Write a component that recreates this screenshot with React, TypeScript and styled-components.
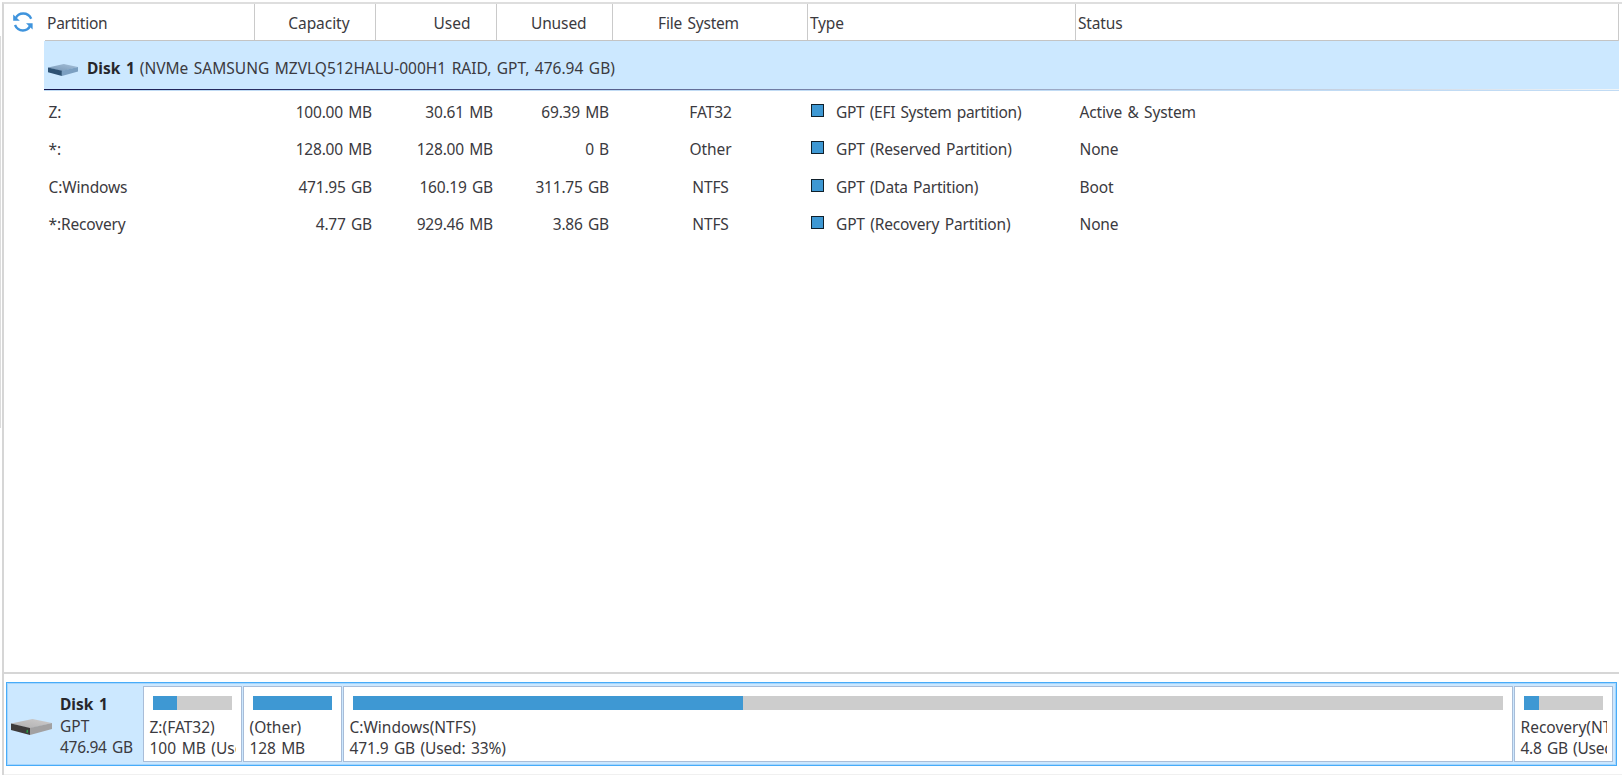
import React from "react";
import styled, { createGlobalStyle } from "styled-components";

const GlobalStyle = createGlobalStyle`
  * { box-sizing: border-box; }
  html, body { margin: 0; padding: 0; background: #fff; overflow: hidden; }
  body {
    font-family: "Noto Sans", "Open Sans", sans-serif;
    font-size: 15.5px;
    line-height: 22px;
    word-spacing: 1.5px;
    color: #3b3a40;
  }
`;

const COLUMNS = "210px 121px 121px 116px 195px 268px 1fr";

const Screen = styled.div`
  display: flex;
  width: 1622px;
  height: 775px;
  padding-top: 2px;
`;

const Gutter = styled.div`
  width: 2px;
  flex: none;
  margin-top: 34px;
  height: 392px;
  border-left: 1px solid #dcdcdc;
`;

const Main = styled.main`
  display: flex;
  flex-direction: column;
  flex: 1;
  min-width: 0;
  border-left: 2px solid #d6d6d6;
  border-top: 2px solid #dedede;
`;

const Table = styled.section`
  display: flex;
  flex-direction: column;
  height: 668px;
  flex: none;
  margin-right: 3px;
`;

const Header = styled.div`
  display: flex;
  height: 37px;
  flex: none;
  border-right: 1px solid #cacaca;
`;

const RefreshCell = styled.div`
  width: 41px;
  padding: 8px 0 0 9px;
`;

const HeaderGrid = styled.div`
  display: grid;
  grid-template-columns: ${COLUMNS};
  flex: 1;
  border-bottom: 1px solid #c4c4c4;
`;

type Align = "left" | "right" | "center";

const HeaderCell = styled.div<{ $align?: Align; $track?: number }>`
  padding: 8px ${(p) => (p.$align === "right" ? 25.5 : 23)}px 0 ${(p) => (p.$align === "center" ? 0 : 2)}px;
  text-align: ${(p) => p.$align ?? "left"};
  letter-spacing: ${(p) => p.$track ?? 0}px;
  border-right: 1px solid #cacaca;
  white-space: nowrap;
  &:last-child { border-right: 0; }
`;

const DiskRow = styled.div`
  display: flex;
  align-items: center;
  height: 48px;
  flex: none;
  margin-left: 40px;
  padding: 6px 0 0 4px;
  background: #cce8ff;
`;

const DiskIcon = styled.span`
  display: flex;
  padding-top: 4px;
`;

const DiskRule = styled.div`
  height: 1px;
  flex: none;
  margin-left: 40px;
  background: linear-gradient(90deg, #14184f 0%, #3b4275 25%, #7986ad 50%, #b7c4d8 75%, #f1f5f8 100%);
  box-shadow: 0 1px 0 #c1dbf4;
`;

const DiskTitle = styled.div`
  display: flex;
  gap: 5px;
  margin-left: 9px;
  white-space: nowrap;
`;

const Bold = styled.strong`
  font-weight: 700;
  color: #27272b;
`;

const Text = styled.span<{ $track?: number }>`
  letter-spacing: ${(p) => p.$track ?? 0}px;
`;

const Rows = styled.div`
  margin: 3px 0 0 41px;
`;

const Row = styled.div`
  display: grid;
  grid-template-columns: ${COLUMNS};
  align-items: center;
  height: 37.5px;
`;

const Cell = styled.div<{ $align?: Align; $track?: number }>`
  padding: 0 ${(p) => (p.$align === "right" ? 4 : 0)}px 0 ${(p) => (p.$align === "center" ? 0 : 3.5)}px;
  text-align: ${(p) => p.$align ?? "left"};
  letter-spacing: ${(p) => p.$track ?? 0}px;
  white-space: nowrap;
`;

const TypeCell = styled(Cell)`
  display: flex;
  align-items: center;
  gap: 12px;
  padding-left: 3px;
`;

const Swatch = styled.i`
  width: 13px;
  height: 13px;
  flex: none;
  margin-bottom: 3px;
  background: #3e98d3;
  border: 1px solid #10202b;
`;

const Splitter = styled.div`
  height: 2px;
  flex: none;
  margin-right: 3px;
  background: #d6d6d6;
`;

const DiskMap = styled.section`
  display: flex;
  gap: 1px;
  height: 84px;
  flex: none;
  margin: 8px 5px 0 2px;
  padding: 3px 3px 3px 2px;
  background: #cce8ff;
  border: 1px solid #47acf9;
  box-shadow: inset 0 0 0 1px #a6d5fc;
`;

const DiskInfo = styled.div`
  display: flex;
  align-items: center;
  gap: 8px;
  width: 133px;
  padding-left: 2px;
  flex: none;
`;

const DriveSlot = styled.span`
  display: flex;
  padding-top: 5px;
`;

const DiskLabels = styled.div`
  display: flex;
  flex-direction: column;
  white-space: nowrap;
  margin-top: 5px;
  line-height: 21.8px;
`;

const PartitionCard = styled.div<{ $wide?: boolean }>`
  flex: ${(p) => (p.$wide ? "1 1 0" : "0 0 99px")};
  min-width: 0;
  padding: 9px 5px 0;
  background: #fff;
  border: 1px solid #a9bdd8;
`;

const UsageBar = styled.div`
  display: flex;
  height: 14px;
  margin: 0 4px 7px;
  background: #cdcdcd;
`;

const UsageFill = styled.div`
  background: #3e98d3;
`;

const CardLine = styled.div<{ $track?: number }>`
  overflow: hidden;
  padding-left: 0.5px;
  line-height: 21px;
  white-space: nowrap;
  letter-spacing: ${(p) => p.$track ?? 0}px;
`;

const BottomEdge = styled.div`
  margin-top: auto;
  height: 1px;
  background: #f0f0f0;
`;

const RefreshIcon = () => (
  <svg width="20" height="20" viewBox="0 0 20 20" fill="none">
    <path d="M2.6 6.4C4 3.2 7 1.5 10.2 1.5c3.5 0 6.5 2 8 5.2" stroke="#3f94dd" strokeWidth="2.4" />
    <path d="M0.2 2.5v6.2h6.6z" fill="#3f94dd" />
    <path d="M17.3 13.5c-1.4 3.2-4.2 5-7.4 5-3.5 0-6.4-2-7.9-5.4" stroke="#3f94dd" strokeWidth="2.4" />
    <path d="M19.6 17.5v-6.2h-6.6z" fill="#3f94dd" />
  </svg>
);

const DriveIcon = ({ blue = false }: { blue?: boolean }) => {
  const id = blue ? "top-blue" : "top-gray";
  return (
    <svg width={blue ? 30 : 41} height={blue ? 12 : 16} viewBox="0 0 41 16" preserveAspectRatio="none">
      <defs>
        <linearGradient id={id} x1="0" y1="1" x2="1" y2="0">
          <stop offset="0" stopColor={blue ? "#7595b5" : "#aeadae"} />
          <stop offset="1" stopColor={blue ? "#a7c1d9" : "#cecccc"} />
        </linearGradient>
      </defs>
      <path d="M0 4.5 21.5 0 41 4 19 9.5z" fill={`url(#${id})`} />
      <path d="M0 4.5 19 9v7L0 11z" fill={blue ? "#2e5274" : "#3d3b3b"} />
      <path d="M19 9 41 4v6l-22 6z" fill={blue ? "#7b9fc1" : "#a2a1a2"} />
      {!blue && <path d="M15.5 11.5 17 10.5v3l-1.5.5z" fill="#27a043" />}
    </svg>
  );
};

const headers: { label: string; align?: Align; track?: number }[] = [
  { label: "Partition", track: -0.25 },
  { label: "Capacity", align: "right", track: -0.05 },
  { label: "Used", align: "right" },
  { label: "Unused", align: "right", track: -0.1 },
  { label: "File System", align: "center", track: -0.2 },
  { label: "Type", track: -0.2 },
  { label: "Status", track: -0.15 },
];

const partitions = [
  { name: "Z:", capacity: "100.00 MB", used: "30.61 MB", unused: "69.39 MB", fs: "FAT32", type: "GPT (EFI System partition)", typeTrack: -0.28, status: "Active & System" },
  { name: "*:", capacity: "128.00 MB", used: "128.00 MB", unused: "0 B", fs: "Other", type: "GPT (Reserved Partition)", typeTrack: -0.15, status: "None" },
  { name: "C:Windows", capacity: "471.95 GB", used: "160.19 GB", unused: "311.75 GB", fs: "NTFS", type: "GPT (Data Partition)", typeTrack: -0.22, status: "Boot" },
  { name: "*:Recovery", capacity: "4.77 GB", used: "929.46 MB", unused: "3.86 GB", fs: "NTFS", type: "GPT (Recovery Partition)", typeTrack: -0.15, status: "None" },
];

const cards = [
  { title: "Z:(FAT32)", detail: "100 MB (Used: 30%)", fill: 30.5, detailTrack: 0 },
  { title: "(Other)", detail: "128 MB", fill: 100, detailTrack: -0.12 },
  { title: "C:Windows(NTFS)", detail: "471.9 GB (Used: 33%)", fill: 33.9, detailTrack: -0.12, wide: true },
  { title: "Recovery(NTFS)", detail: "4.8 GB (Used: 19%)", fill: 19.5, detailTrack: -0.25 },
];

export default function App() {
  return (
    <>
      <GlobalStyle />
      <Screen>
        <Gutter />
        <Main>
          <Table>
            <Header>
              <RefreshCell><RefreshIcon /></RefreshCell>
              <HeaderGrid>
                {headers.map((h) => (
                  <HeaderCell key={h.label} $align={h.align} $track={h.track}>{h.label}</HeaderCell>
                ))}
              </HeaderGrid>
            </Header>
            <DiskRow>
              <DiskIcon><DriveIcon blue /></DiskIcon>
              <DiskTitle>
                <Bold>Disk 1</Bold>
                <Text>(NVMe SAMSUNG MZVLQ512HALU-000H1 RAID, GPT, 476.94 GB)</Text>
              </DiskTitle>
            </DiskRow>
            <DiskRule />
            <Rows>
              {partitions.map((p, i) => (
                <Row key={i}>
                  <Cell $track={-0.15}>{p.name}</Cell>
                  <Cell $align="right" $track={-0.2}>{p.capacity}</Cell>
                  <Cell $align="right" $track={-0.2}>{p.used}</Cell>
                  <Cell $align="right" $track={-0.2}>{p.unused}</Cell>
                  <Cell $align="center" $track={-0.1}>{p.fs}</Cell>
                  <TypeCell><Swatch /><Text $track={p.typeTrack}>{p.type}</Text></TypeCell>
                  <Cell $track={-0.15}>{p.status}</Cell>
                </Row>
              ))}
            </Rows>
          </Table>
          <Splitter />
          <DiskMap>
            <DiskInfo>
              <DriveSlot><DriveIcon /></DriveSlot>
              <DiskLabels>
                <Bold>Disk 1</Bold>
                <Text>GPT</Text>
                <Text $track={-0.3}>476.94 GB</Text>
              </DiskLabels>
            </DiskInfo>
            {cards.map((c) => (
              <PartitionCard key={c.title} $wide={c.wide}>
                <UsageBar><UsageFill style={{ width: `${c.fill}%` }} /></UsageBar>
                <CardLine>{c.title}</CardLine>
                <CardLine $track={c.detailTrack}>{c.detail}</CardLine>
              </PartitionCard>
            ))}
          </DiskMap>
          <BottomEdge />
        </Main>
      </Screen>
    </>
  );
}
